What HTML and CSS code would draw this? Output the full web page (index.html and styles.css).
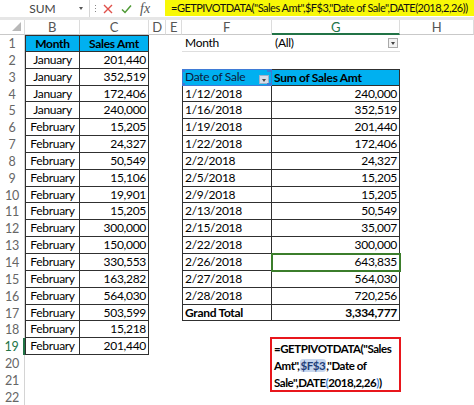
FILE: index.html
```html
<!DOCTYPE html>
<html>
  <head>
    <meta charset="utf-8" />
    <title>GETPIVOTDATA example</title>
    <link rel="stylesheet" href="styles.css">
  </head>
  <body>
    <div class="topbar">
      <div class="namebox">
        <span class="nb-text">SUM</span>
        <span class="nb-arrow"></span>
      </div>
      <div class="grip"><i></i><i></i><i></i></div>
      <div class="fx-icons">
        <svg class="cancel" width="10" height="10" viewBox="0 0 10 10">
          <path d="M1 1 L9 9 M9 1 L1 9" stroke="#e0504a" stroke-width="1.4" fill="none" />
        </svg>
        <svg class="enter" width="11" height="10" viewBox="0 0 11 10">
          <path d="M1 5.5 L4 8.5 L10 1.5" stroke="#4f9a35" stroke-width="1.5" fill="none" />
        </svg>
        <span class="fx">fx</span>
      </div>
      <div class="formula">=GETPIVOTDATA("Sales Amt",$F$3,"Date of Sale",DATE(2018,2,26))</div>
    </div>
    <div class="band"></div>

    <div class="sheet">
      <div class="row colheads">
        <div class="corner"></div>
        <div>B</div><div>C</div><div>D</div><div>E</div><div>F</div><div class="on">G</div><div>H</div>
      </div>

      <div class="row">
        <div class="rh">1</div>
        <div class="c first top hd ctr">Month</div>
        <div class="c top hd ctr">Sales Amt</div>
        <div class="f flt">Month</div>
        <div class="flt">(All)<span class="filter-btn"></span></div>
      </div>
      <div class="row">
        <div class="rh">2</div>
        <div class="c first ctr">January</div><div class="c num">201,440</div>
      </div>
      <div class="row">
        <div class="rh">3</div>
        <div class="c first ctr">January</div><div class="c num">352,519</div>
        <div class="f p pl top hd pivot-hd">Date of Sale<span class="pv-btn"></span><span class="handles"></span></div>
        <div class="p top hd">Sum of Sales Amt</div>
      </div>
      <div class="row">
        <div class="rh">4</div>
        <div class="c first ctr">January</div><div class="c num">172,406</div>
        <div class="f p pl">1/12/2018</div><div class="p num">240,000</div>
      </div>
      <div class="row">
        <div class="rh">5</div>
        <div class="c first ctr">January</div><div class="c num">240,000</div>
        <div class="f p pl">1/16/2018</div><div class="p num">352,519</div>
      </div>
      <div class="row">
        <div class="rh">6</div>
        <div class="c first ctr">February</div><div class="c num">15,205</div>
        <div class="f p pl">1/19/2018</div><div class="p num">201,440</div>
      </div>
      <div class="row">
        <div class="rh">7</div>
        <div class="c first ctr">February</div><div class="c num">24,327</div>
        <div class="f p pl">1/22/2018</div><div class="p num">172,406</div>
      </div>
      <div class="row">
        <div class="rh">8</div>
        <div class="c first ctr">February</div><div class="c num">50,549</div>
        <div class="f p pl">2/2/2018</div><div class="p num">24,327</div>
      </div>
      <div class="row">
        <div class="rh">9</div>
        <div class="c first ctr">February</div><div class="c num">15,106</div>
        <div class="f p pl">2/5/2018</div><div class="p num">15,205</div>
      </div>
      <div class="row">
        <div class="rh">10</div>
        <div class="c first ctr">February</div><div class="c num">19,901</div>
        <div class="f p pl">2/9/2018</div><div class="p num">15,205</div>
      </div>
      <div class="row">
        <div class="rh">11</div>
        <div class="c first ctr">February</div><div class="c num">15,205</div>
        <div class="f p pl">2/13/2018</div><div class="p num">50,549</div>
      </div>
      <div class="row">
        <div class="rh">12</div>
        <div class="c first ctr">February</div><div class="c num">300,000</div>
        <div class="f p pl">2/15/2018</div><div class="p num">35,007</div>
      </div>
      <div class="row">
        <div class="rh">13</div>
        <div class="c first ctr">February</div><div class="c num">150,000</div>
        <div class="f p pl">2/22/2018</div><div class="p num">300,000</div>
      </div>
      <div class="row">
        <div class="rh">14</div>
        <div class="c first ctr">February</div><div class="c num">330,553</div>
        <div class="f p pl">2/26/2018</div><div class="p num active">643,835</div>
      </div>
      <div class="row">
        <div class="rh">15</div>
        <div class="c first ctr">February</div><div class="c num">163,282</div>
        <div class="f p pl">2/27/2018</div><div class="p num">564,030</div>
      </div>
      <div class="row">
        <div class="rh">16</div>
        <div class="c first ctr">February</div><div class="c num">564,030</div>
        <div class="f p pl">2/28/2018</div><div class="p num">720,256</div>
      </div>
      <div class="row">
        <div class="rh">17</div>
        <div class="c first ctr">February</div><div class="c num">503,599</div>
        <div class="f p pl bold">Grand Total</div><div class="p num bold">3,334,777</div>
      </div>
      <div class="row">
        <div class="rh">18</div>
        <div class="c first ctr">February</div><div class="c num">15,218</div>
      </div>
      <div class="row">
        <div class="rh on">19</div>
        <div class="c first ctr">February</div><div class="c num">201,440</div>
      </div>
      <div class="row"><div class="rh">20</div></div>
      <div class="row"><div class="rh">21</div></div>
      <div class="row"><div class="rh">22</div></div>

      <!-- text box laid over G19:G21 -->
      <div class="callout">
        =GETPIVOTDATA("Sales<br>
        Amt",<span class="ref">$F$3</span>,"Date of<br>
        Sale",DATE<span class="paren">(</span>2018,2,26<span class="paren">)</span>)
      </div>
    </div>
  </body>
</html>
```

FILE: styles.css
```css
body {
  margin: 0;
  width: 474px;
  height: 405px;
  overflow: hidden;
  background: #fff;
  color: #000;
  font-family: Lato, "Liberation Sans", sans-serif;
  font-size: 12px;
}

/* formula bar */
.topbar {
  display: flex;
  height: 17px;
}

.namebox {
  width: 90px;
  box-sizing: border-box;
  border-right: 1px solid #d6d6d6;
  display: grid;
  grid-template-columns: 1fr 10px;
  align-items: center;
  color: #444;
}

.nb-text {
  text-align: center;
  padding-left: 6px;
}

.nb-arrow {
  width: 0;
  height: 0;
  border-left: 2.5px solid transparent;
  border-right: 2.5px solid transparent;
  border-top: 3px solid #555;
}

.grip {
  width: 10px;
  display: flex;
  flex-direction: column;
  justify-content: center;
  align-items: center;
  gap: 2px;
}

.grip i {
  width: 1px;
  height: 1px;
  background: #888;
}

.fx-icons {
  width: 65px;
  display: flex;
  align-items: center;
}

.cancel {
  margin-left: 3px;
}

.enter {
  margin-left: 8px;
}

.fx {
  margin-left: 8px;
  font-family: "Liberation Serif", serif;
  font-style: italic;
  font-size: 14px;
  color: #555;
}

.formula {
  flex: 1;
  height: 16px;
  line-height: 16px;
  padding-left: 6px;
  background: #f8f806;
  white-space: nowrap;
  overflow: hidden;
  font-size: 11px;
  letter-spacing: -0.5px;
  color: #111;
}

.band {
  height: 3px;
  background: #e6e6e6;
}

/* grid */
.sheet {
  position: relative;
}

.row {
  display: grid;
  grid-template-columns: 25px 55px 69px 17px 16px 90px 128px 74px;
  height: 16.85px;
}

.row > div {
  box-sizing: border-box;
  line-height: 16px;
  padding: 0 2px;
  white-space: nowrap;
  overflow: hidden;
  letter-spacing: -0.3px;
}

.colheads {
  height: 15px;
}

.colheads > div {
  line-height: 15px;
  text-align: center;
  color: #555;
  font-size: 13px;
  border-right: 1px solid #dcdcdc;
  border-bottom: 1px solid #c9c9c9;
}

.colheads .on {
  color: #217346;
  border-bottom: 2px solid #217346;
}

.corner {
  position: relative;
}

.corner::after {
  content: "";
  position: absolute;
  right: 3px;
  bottom: 3px;
  border-left: 9px solid transparent;
  border-bottom: 9px solid #b9b9b9;
}

.rh {
  text-align: center;
  color: #666;
  border-right: 1px solid #d4d4d4;
  line-height: 17px !important;
  font-size: 12.5px;
}

.rh.on {
  color: #217346;
  border-right: 2px solid #217346;
}

/* bordered tables */
.c,
.p {
  border-right: 1px solid #303030;
  border-bottom: 1px solid #303030;
}

.first,
.pl {
  border-left: 1px solid #303030;
}

.top {
  border-top: 1px solid #303030;
}

.f {
  grid-column: 6;
}

.hd {
  background: #00b0f0;
  font-weight: bold;
}

.ctr {
  text-align: center;
}

.num {
  text-align: right;
}

.bold {
  font-weight: bold;
}

/* pivot filter row */
.flt {
  border-bottom: 1px solid #dedede;
  padding-left: 3px !important;
}

.flt .filter-btn {
  float: right;
  width: 10px;
  height: 10px;
  margin-top: 3px;
  box-sizing: border-box;
  border: 1px solid #a9a9a9;
  background: #f2f2f2;
  position: relative;
}

.filter-btn::after,
.pv-btn::after {
  content: "";
  position: absolute;
  left: 2px;
  top: 3px;
  border-left: 2.5px solid transparent;
  border-right: 2.5px solid transparent;
  border-top: 3px solid #444;
}

/* pivot header */
.pivot-hd {
  position: relative;
  font-weight: normal;
  display: flex;
  align-items: center;
  outline: 1px solid #3f7bd6;
  outline-offset: -1px;
  color: #0d1a3a;
}

.pv-btn {
  margin-left: auto;
  margin-top: 4px;
  width: 10px;
  height: 9px;
  box-sizing: border-box;
  border: 1px solid #9fb0c8;
  background: #d5dde9;
  position: relative;
}

.handles {
  position: absolute;
  left: -2px;
  top: -2px;
  right: 0;
  bottom: -2px;
  background:
    linear-gradient(#3f7bd6, #3f7bd6) left top / 4px 4px no-repeat,
    linear-gradient(#3f7bd6, #3f7bd6) right top / 4px 4px no-repeat,
    linear-gradient(#3f7bd6, #3f7bd6) left bottom / 4px 4px no-repeat,
    linear-gradient(#3f7bd6, #3f7bd6) right bottom / 4px 4px no-repeat;
}

.active {
  position: relative;
  outline: 2px solid #3b7d2b;
  outline-offset: -1px;
}

/* annotation box */
.callout {
  position: absolute;
  left: 270px;
  top: 317px;
  width: 131px;
  height: 55px;
  box-sizing: border-box;
  border: 2px solid #e8161c;
  background: #fff;
  padding: 1px 0 0 2px;
  font-weight: bold;
  font-size: 11.5px;
  line-height: 17px;
  letter-spacing: -0.45px;
  white-space: nowrap;
}

.ref {
  background: #c6d6ee;
  color: #1f3f7a;
  border-radius: 3px;
  padding: 0 1px;
}

.paren {
  color: #4a86d8;
}
```
